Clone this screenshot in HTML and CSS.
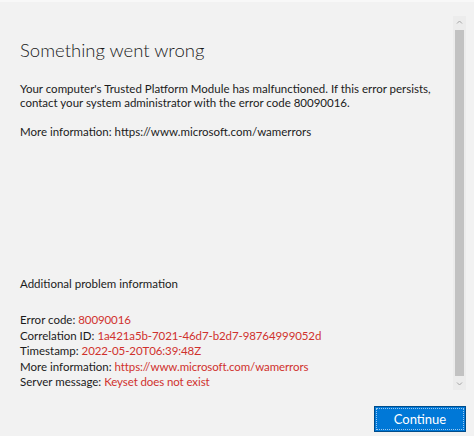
FILE: index.html
```html
<!DOCTYPE html>
<html lang="en">
<head>
<meta charset="utf-8">
<title>Something went wrong</title>
<link rel="stylesheet" href="styles.css">
</head>
<body>
<div class="dialog">
  <div class="main">
    <div class="content">
      <h1 class="title">Something went wrong</h1>
      <p class="msg">Your computer's Trusted Platform Module has malfunctioned. If this error persists, contact your system administrator with the error code 80090016.</p>
      <p class="msg more">More information: https://www.microsoft.com/wamerrors</p>
      <div class="spacer"></div>
      <p class="additional">Additional problem information</p>
      <div class="details">
        <div>Error code: <span class="val">80090016</span></div>
        <div>Correlation ID: <span class="val">1a421a5b-7021-46d7-b2d7-98764999052d</span></div>
        <div>Timestamp: <span class="val">2022-05-20T06:39:48Z</span></div>
        <div>More information: <span class="val">https://www.microsoft.com/wamerrors</span></div>
        <div>Server message: <span class="val">Keyset does not exist</span></div>
      </div>
    </div>
    <div class="scrollbar">
      <svg class="arrow" width="13" height="12" viewBox="0 0 13 12"><path d="M4 7.5 L6.5 5 L9 7.5" fill="none" stroke="#a6a6a6" stroke-width="1"/></svg>
      <div class="thumb"></div>
      <svg class="arrow" width="13" height="12" viewBox="0 0 13 12"><path d="M4 4.5 L6.5 7 L9 4.5" fill="none" stroke="#a6a6a6" stroke-width="1"/></svg>
    </div>
  </div>
  <div class="footer">
    <button class="btn">Continue</button>
  </div>
</div>
</body>
</html>
```
FILE: styles.css
```css
html, body {
  margin: 0;
  padding: 0;
  background: #f2f2f2;
}
body {
  font-family: "Lato", "Open Sans", "Liberation Sans", sans-serif;
  color: #1b1b1b;
}
.dialog {
  width: 474px;
  height: 436px;
  box-sizing: border-box;
  border-top: 2px solid #f8f8f8;
  display: flex;
  flex-direction: column;
}
.main {
  flex: 1;
  display: flex;
  min-height: 0;
}
.content {
  flex: 1;
  padding: 34px 0 0 20px;
  display: flex;
  flex-direction: column;
}
.title {
  margin: 0;
  font-size: 18.5px;
  font-weight: 300;
  line-height: 28px;
  color: #1a1a1a;
}
.msg {
  margin: 18px 0 0;
  font-size: 11.5px;
  line-height: 14px;
}
.msg.more {
  margin-top: 15px;
}
.spacer {
  height: 137px;
}
.additional {
  margin: 0;
  font-size: 11.5px;
  line-height: 15px;
}
.details {
  margin-top: 21px;
  font-size: 11.5px;
  line-height: 15.5px;
}
.val {
  color: #d0312d;
  letter-spacing: -0.1px;
}
.scrollbar {
  width: 13px;
  margin: 14px 8px 0 0;
  height: 374px;
  background: #ececec;
  display: flex;
  flex-direction: column;
  align-items: center;
}
.arrow {
  display: block;
  flex: none;
}
.thumb {
  flex: 1;
  width: 9px;
  background: #c2c2c2;
  margin: 2px 0;
}
.footer {
  display: flex;
  justify-content: flex-end;
  padding: 0 8px 4px 0;
}
.btn {
  width: 92px;
  height: 26px;
  background: #0078d7;
  border: 1px solid #004c8a;
  outline: 1px dotted #9cc8ee;
  outline-offset: -3px;
  color: #fff;
  font-family: "Lato", "Open Sans", "Liberation Sans", sans-serif;
  font-size: 13px;
  padding: 0;
}
```
